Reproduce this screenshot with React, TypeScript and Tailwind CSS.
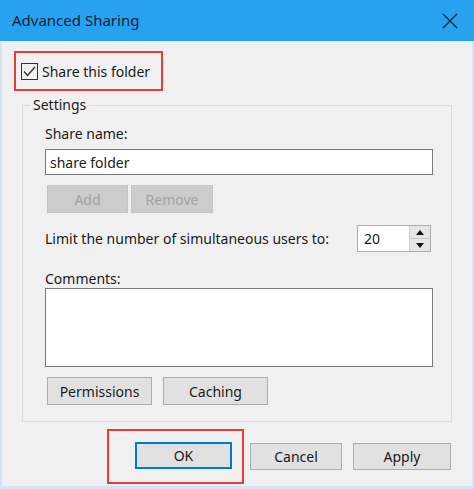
import React from "react";

function WinButton({
  label,
  disabled,
  className = "",
}: {
  label: string;
  disabled?: boolean;
  className?: string;
}) {
  return (
    <button
      disabled={disabled}
      className={
        "flex items-center justify-center border text-[14px] " +
        (disabled
          ? "bg-[#cccccc] border-[#c4c4c4] text-[#a3a3a3] "
          : "bg-[#e1e1e1] border-[#adadad] text-[#1a1a1a] ") +
        className
      }
    >
      {label}
    </button>
  );
}

export default function App() {
  return (
    <div
      className="w-[474px] h-[489px] flex flex-col bg-[#f0f0f0] overflow-hidden text-[#1a1a1a]"
      style={{ fontFamily: '"Noto Sans", "Open Sans", sans-serif' }}
    >
      {/* title bar */}
      <div className="h-[41px] flex-shrink-0 bg-[#27a2ef] flex items-center justify-between pl-[12px] pr-[16px]">
        <span className="text-[15px] text-[#0f2238]">Advanced Sharing</span>
        <svg width="16" height="16" viewBox="0 0 16 16" className="text-[#0f2238]">
          <path d="M1 1 L15 15 M15 1 L1 15" stroke="currentColor" strokeWidth="1.2" fill="none" />
        </svg>
      </div>

      <div className="flex-1 flex flex-col border-t-2 border-t-[#e9f3fc] border-x-2 border-b-[3px] border-[#cfe5f8]">
        {/* share checkbox */}
        <div className="mt-[8px] ml-[12px] w-[149px] h-[40px] border-2 border-[#e53c3c] flex items-center pl-[5px] gap-[4px]">
          <div className="w-[17px] h-[17px] border-[1.5px] border-[#333333] bg-[#f0f0f0] flex items-center justify-center">
            <svg width="13" height="11" viewBox="0 0 13 11">
              <path d="M1 5.5 L4.5 9.5 L12 1" stroke="#333333" strokeWidth="1.4" fill="none" />
            </svg>
          </div>
          <span className="text-[14px]">Share this folder</span>
        </div>

        {/* settings group */}
        <fieldset className="mt-[4px] ml-[20px] mr-[20px] border border-[#dcdcdc] pl-[22px] pr-[18px] pb-[16px]">
          <legend className="-ml-[15px] px-[3px] text-[14px] leading-[20px]">Settings</legend>
          <div className="mt-[9px] text-[14px] leading-[20px]">Share name:</div>
          <div className="mt-[5px] h-[26px] border border-[#7a7a7a] bg-white flex items-center pl-[4px] text-[14px]">
            share folder
          </div>
          <div className="mt-[10px] flex gap-[3px] pl-[2px]">
            <WinButton label="Add" disabled className="w-[81px] h-[28px]" />
            <WinButton label="Remove" disabled className="w-[82px] h-[28px]" />
          </div>
          <div className="mt-[12px] flex items-center justify-between">
            <span className="text-[14px]">Limit the number of simultaneous users to:</span>
            <div className="mr-[2px] w-[74px] h-[27px] border border-[#adadad] bg-white flex">
              <div className="flex-1 flex items-center pl-[6px] text-[14px]">20</div>
              <div className="w-[21px] flex flex-col border-l border-[#d0d0d0]">
                <div className="flex-1 bg-[#e6e6e6] flex items-center justify-center border-b border-[#c8c8c8]">
                  <svg width="8" height="5" viewBox="0 0 8 5">
                    <path d="M0 5 L4 0 L8 5 Z" fill="#111111" />
                  </svg>
                </div>
                <div className="flex-1 bg-[#e6e6e6] flex items-center justify-center">
                  <svg width="8" height="5" viewBox="0 0 8 5">
                    <path d="M0 0 L4 5 L8 0 Z" fill="#111111" />
                  </svg>
                </div>
              </div>
            </div>
          </div>
          <div className="mt-[17px] text-[14px] leading-[19px]">Comments:</div>
          <div className="h-[79px] border border-[#7a7a7a] bg-white" />
          <div className="mt-[10px] flex gap-[11px] pl-[2px]">
            <WinButton label="Permissions" className="w-[105px] h-[28px]" />
            <WinButton label="Caching" className="w-[105px] h-[28px]" />
          </div>
        </fieldset>

        {/* dialog buttons */}
        <div className="mt-[7px] flex items-center justify-end pr-[21px]">
          <div className="w-[137px] h-[55px] border-2 border-[#e53c3c] pl-[26px] pt-[11px]">
            <WinButton label="OK" className="w-[97px] h-[27px] !border-2 !border-[#0078d7]" />
          </div>
          <WinButton label="Cancel" className="ml-[6px] w-[92px] h-[27px]" />
          <WinButton label="Apply" className="ml-[11px] w-[98px] h-[27px]" />
        </div>
      </div>
    </div>
  );
}
